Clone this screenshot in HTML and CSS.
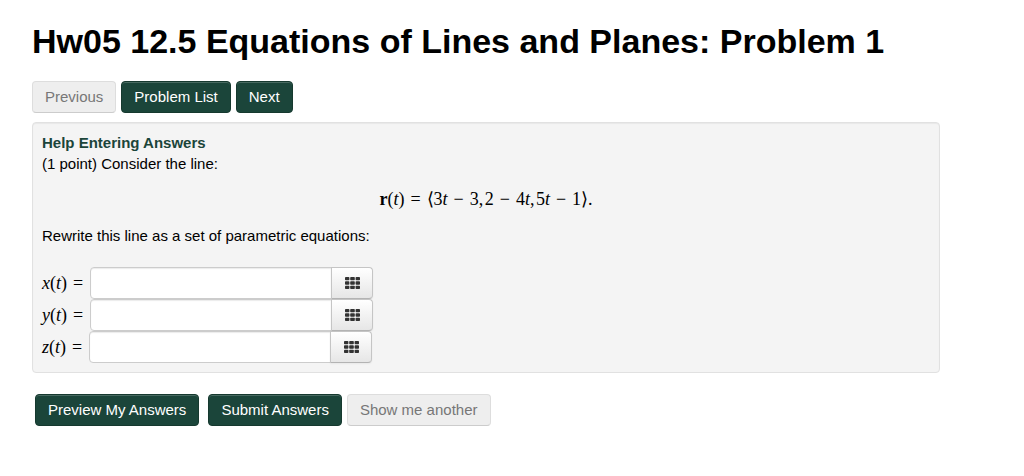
FILE: index.html
```html
<!DOCTYPE html>
<html lang="en">
  <head>
    <meta charset="UTF-8" />
    <meta name="viewport" content="width=device-width, initial-scale=1.0" />
    <title>Hw05 12.5 Equations of Lines and Planes: Problem 1</title>
    <link rel="stylesheet" href="styles.css">
  </head>
  <body>
    <svg class="sprite" aria-hidden="true">
      <symbol id="keypad" viewBox="0 0 15 12">
        <rect x="0" y="0" width="4.4" height="3.3" rx="0.8" />
        <rect x="5.2" y="0" width="4.6" height="3.3" rx="0.8" />
        <rect x="10.6" y="0" width="4.4" height="3.3" rx="0.8" />
        <rect x="0" y="4.3" width="4.4" height="3.4" rx="0.8" />
        <rect x="5.2" y="4.3" width="4.6" height="3.4" rx="0.8" />
        <rect x="10.6" y="4.3" width="4.4" height="3.4" rx="0.8" />
        <rect x="0" y="8.7" width="4.4" height="3.3" rx="0.8" />
        <rect x="5.2" y="8.7" width="4.6" height="3.3" rx="0.8" />
        <rect x="10.6" y="8.7" width="4.4" height="3.3" rx="0.8" />
      </symbol>
    </svg>

    <main class="container">
      <h1>Hw05 12.5 Equations of Lines and Planes: Problem 1</h1>

      <nav class="problem-nav">
        <button type="button" class="btn" disabled>Previous</button>
        <a href="#" class="btn btn-primary">Problem List</a>
        <a href="#" class="btn btn-primary">Next</a>
      </nav>

      <form>
        <div class="problem">
          <a href="#" class="help-link">Help Entering Answers</a>
          <p>(1 point) Consider the line:</p>
          <div class="equation math"><b>r</b>(<i>t</i>)&emsp13;=&emsp13;⟨3<i>t</i>&emsp13;−&emsp13;3,&hairsp;2&emsp13;−&emsp13;4<i>t</i>,&hairsp;5<i>t</i>&emsp13;−&emsp13;1⟩.</div>
          <p>Rewrite this line as a set of parametric equations:</p>

          <div class="answers">
            <div class="answer">
              <label class="math" for="answer-x"><i>x</i>(<i>t</i>)&emsp13;=</label>
              <input type="text" id="answer-x" />
              <button type="button" class="keypad-btn" aria-label="Equation editor for x(t)">
                <svg class="icon"><use href="#keypad" /></svg>
              </button>
            </div>
            <div class="answer">
              <label class="math" for="answer-y"><i>y</i>(<i>t</i>)&emsp13;=</label>
              <input type="text" id="answer-y" />
              <button type="button" class="keypad-btn" aria-label="Equation editor for y(t)">
                <svg class="icon"><use href="#keypad" /></svg>
              </button>
            </div>
            <div class="answer">
              <label class="math" for="answer-z"><i>z</i>(<i>t</i>)&emsp13;=</label>
              <input type="text" id="answer-z" />
              <button type="button" class="keypad-btn" aria-label="Equation editor for z(t)">
                <svg class="icon"><use href="#keypad" /></svg>
              </button>
            </div>
          </div>
        </div>

        <div class="submit-buttons">
          <button type="button" class="btn btn-primary btn-preview">Preview My Answers</button>
          <button type="button" class="btn btn-primary">Submit Answers</button>
          <button type="button" class="btn" disabled>Show me another</button>
        </div>
      </form>
    </main>
  </body>
</html>
```

FILE: styles.css
```css
* {
  box-sizing: border-box;
}

body {
  margin: 0;
  background: #fff;
  color: #000;
  font-family: "Liberation Sans", Arial, sans-serif;
  font-size: 15px;
  line-height: 21px;
}

.sprite {
  display: none;
}

.container {
  padding: 20px 84px 20px 32px;
}

h1 {
  margin: 0 0 19px;
  font-size: 34px;
  line-height: 42px;
}

p {
  margin: 0;
}

.problem-nav {
  display: flex;
  gap: 5px;
  margin-bottom: 9px;
}

.btn {
  height: 32px;
  padding: 0 12px;
  border: 1px solid #ddd;
  border-bottom-color: #ccc;
  border-radius: 4px;
  background: #eee;
  color: #777;
  font: inherit;
  line-height: 30px;
  text-decoration: none;
}

.btn-primary {
  border-color: #16392f;
  background: #1b453a;
  color: #fff;
  box-shadow: inset 0 1px 0 rgba(255, 255, 255, 0.2);
}

.problem {
  margin-bottom: 21px;
  padding: 9px;
  border: 1px solid #e1e1e1;
  border-radius: 4px;
  background: #f4f4f4;
  box-shadow: inset 0 1px 1px rgba(0, 0, 0, 0.05);
}

.help-link {
  display: block;
  color: #1b453a;
  font-weight: bold;
  text-decoration: none;
}

.math {
  font-family: "Liberation Serif", "Times New Roman", serif;
  font-size: 18px;
}

.equation {
  margin: 15px 0;
  text-align: center;
}

.answers {
  margin-top: 21px;
}

.answer {
  display: flex;
  align-items: center;
}

.answer label {
  margin-right: 7px;
}

.answer input {
  width: 242px;
  height: 32px;
  padding: 4px 6px;
  border: 1px solid #ccc;
  border-radius: 4px 0 0 4px;
  background: #fff;
  font: inherit;
  box-shadow: inset 0 1px 1px rgba(0, 0, 0, 0.08);
}

.keypad-btn {
  display: flex;
  align-items: center;
  justify-content: center;
  width: 42px;
  height: 32px;
  margin-left: -1px;
  padding: 0;
  border: 1px solid #c5c5c5;
  border-bottom-color: #b3b3b3;
  border-radius: 0 4px 4px 0;
  background: linear-gradient(#fff, #e6e6e6);
  box-shadow: 0 1px 2px rgba(0, 0, 0, 0.05);
}

.icon {
  width: 15px;
  height: 12px;
  fill: #333;
}

.submit-buttons {
  display: flex;
  gap: 5px;
  padding-left: 3px;
}

.btn-preview {
  margin-right: 4px;
}
```
